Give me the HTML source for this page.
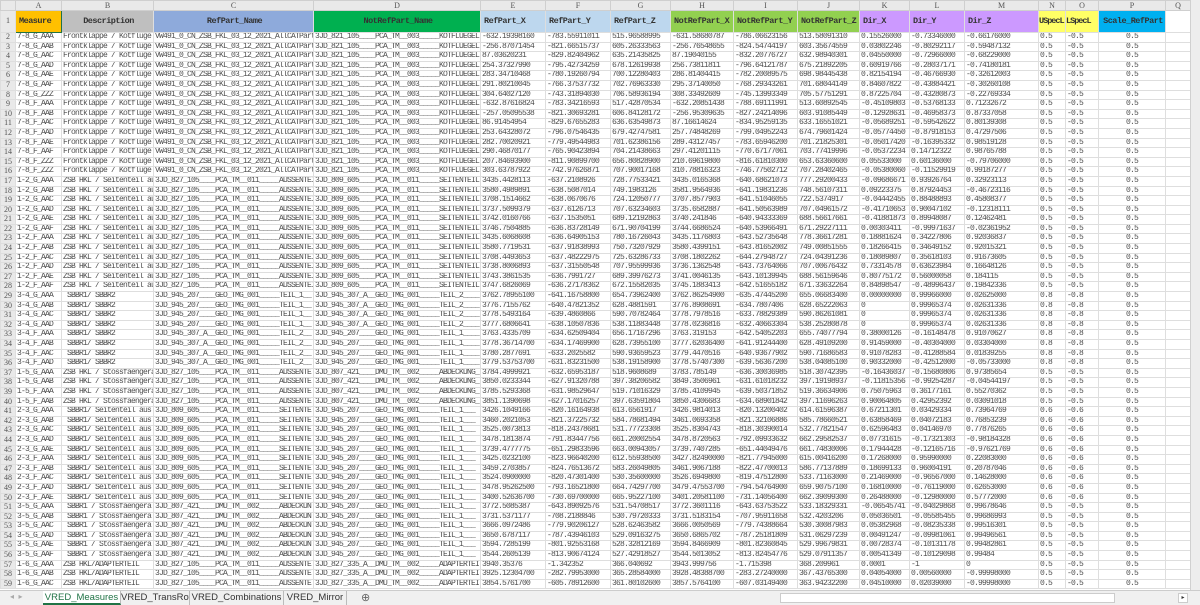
<!DOCTYPE html>
<html><head><meta charset="utf-8"><style>
*{margin:0;padding:0;box-sizing:border-box}
body{width:1200px;height:605px;overflow:hidden;background:#fff;font-family:"Liberation Mono","Noto Sans CJK SC",monospace;font-size:8px;color:#4d4d4d;position:relative}
table{border-collapse:collapse;table-layout:fixed;position:absolute;left:0;top:0;width:1190px}
td,th{border:1px solid #dedede;white-space:nowrap;overflow:hidden;padding:0 1px;height:9.6px;line-height:8.6px;font-weight:normal;text-align:left}
td{letter-spacing:-0.8px}
th{background:#e9e9e9;color:#555;text-align:center;font-family:"Liberation Serif",serif;font-size:8px}
tr.cl th{height:10px;line-height:9px;border-color:#cfcfcf}
tr.h td{height:22px;font-weight:bold;color:#333;font-size:8.5px;text-align:left;padding-left:3px;letter-spacing:-0.5px}
td.c{text-align:center}
.vs{position:absolute;left:1190px;top:0;width:10px;height:590px;background:#ededed;border-left:1px solid #d0d0d0}
.bar{position:absolute;left:0;top:590px;width:1200px;height:15px;background:#f0f0f0;border-top:1px solid #ccc;font-family:"Liberation Sans",sans-serif;font-size:9.5px;color:#333}
.tab{position:absolute;top:0;height:14px;line-height:13px;text-align:center;border-right:1px solid #bbb;white-space:nowrap;overflow:hidden}
</style></head><body>
<table>
<colgroup><col style="width:15px"><col style="width:46px"><col style="width:92px"><col style="width:160px"><col style="width:167px"><col style="width:65px"><col style="width:65px"><col style="width:60px"><col style="width:63px"><col style="width:64px"><col style="width:62px"><col style="width:50px"><col style="width:55px"><col style="width:74px"><col style="width:27px"><col style="width:33px"><col style="width:67px"><col style="width:25px"></colgroup>
<tr class="cl"><th></th><th>A</th><th>B</th><th>C</th><th>D</th><th>E</th><th>F</th><th>G</th><th>H</th><th>I</th><th>J</th><th>K</th><th>L</th><th>M</th><th>N</th><th>O</th><th>P</th><th>Q</th></tr>
<tr class="h"><th>1</th><td style="background:#ffc000;border:1px solid #217346">Measure</td><td style="background:#bfbfbf;text-align:center">Description</td><td style="background:#8eaadb;text-align:center">RefPart_Name</td><td style="background:#00b050;text-align:center">NotRefPart_Name</td><td style="background:#bdd7ee">RefPart_X</td><td style="background:#bdd7ee">RefPart_Y</td><td style="background:#bdd7ee">RefPart_Z</td><td style="background:#92d050">NotRefPart_X</td><td style="background:#92d050">NotRefPart_Y</td><td style="background:#92d050">NotRefPart_Z</td><td style="background:#cc99ff">Dir_X</td><td style="background:#cc99ff">Dir_Y</td><td style="background:#cc99ff">Dir_Z</td><td style="background:#ffff66;padding:0;letter-spacing:-1px">USpecL</td><td style="background:#ffff66;padding:0;letter-spacing:-1px">LSpecL</td><td style="background:#00b0f0;text-align:center">Scale_RefPart</td><td></td></tr>
<tr><th>2</th><td>7-8_G_AAA</td><td>Frontklappe / Kotflügel</td><td>VW491_0_CN_ZSB_FKL_03_12_2021_AllCATPart</td><td>3JD_821_105____PCA_TM__003_____KOTFLUEGEL</td><td>-632.19398160</td><td>-783.55911011</td><td>515.96588995</td><td>-631.58680787</td><td>-786.06623156</td><td>513.58091310</td><td>0.15526000</td><td>-0.73346000</td><td>-0.66176000</td><td>0.5</td><td>-0.5</td><td class="c">0.5</td><td></td></tr>
<tr><th>3</th><td>7-8_G_AAB</td><td>Frontklappe / Kotflügel</td><td>VW491_0_CN_ZSB_FKL_03_12_2021_AllCATPart</td><td>3JD_821_105____PCA_TM__003_____KOTFLUEGEL</td><td>-256.87071454</td><td>-821.66515737</td><td>605.26333563</td><td>-256.76548655</td><td>-824.54744197</td><td>603.35674559</td><td>0.03802246</td><td>-0.80292117</td><td>-0.59487132</td><td>0.5</td><td>-0.5</td><td class="c">0.5</td><td></td></tr>
<tr><th>4</th><td>7-8_G_AAC</td><td>Frontklappe / Kotflügel</td><td>VW491_0_CN_ZSB_FKL_03_12_2021_AllCATPart</td><td>3JD_821_105____PCA_TM__003_____KOTFLUEGEL</td><td>87.03620231</td><td>-829.82404962</td><td>635.21435825</td><td>87.19040155</td><td>-832.20776727</td><td>632.98940301</td><td>0.04550000</td><td>-0.72966000</td><td>-0.68229000</td><td>0.5</td><td>-0.5</td><td class="c">0.5</td><td></td></tr>
<tr><th>5</th><td>7-8_G_AAD</td><td>Frontklappe / Kotflügel</td><td>VW491_0_CN_ZSB_FKL_03_12_2021_AllCATPart</td><td>3JD_821_105____PCA_TM__003_____KOTFLUEGEL</td><td>254.37327990</td><td>-795.42734259</td><td>678.12619938</td><td>256.73811811</td><td>-796.64121787</td><td>675.21892205</td><td>0.60919766</td><td>-0.28037171</td><td>-0.74180181</td><td>0.5</td><td>-0.5</td><td class="c">0.5</td><td></td></tr>
<tr><th>6</th><td>7-8_G_AAE</td><td>Frontklappe / Kotflügel</td><td>VW491_0_CN_ZSB_FKL_03_12_2021_AllCATPart</td><td>3JD_821_105____PCA_TM__003_____KOTFLUEGEL</td><td>283.34710468</td><td>-780.19260794</td><td>700.12280403</td><td>286.81404415</td><td>-782.20089575</td><td>698.98445438</td><td>0.82154194</td><td>-0.46766930</td><td>-0.32612003</td><td>0.5</td><td>-0.5</td><td class="c">0.5</td><td></td></tr>
<tr><th>7</th><td>7-8_G_AAF</td><td>Frontklappe / Kotflügel</td><td>VW491_0_CN_ZSB_FKL_03_12_2021_AllCATPart</td><td>3JD_821_105____PCA_TM__003_____KOTFLUEGEL</td><td>291.80210045</td><td>-766.37537732</td><td>702.76963330</td><td>295.37140050</td><td>-768.29343261</td><td>701.68044149</td><td>0.84607822</td><td>-0.43884421</td><td>-0.30260108</td><td>0.5</td><td>-0.5</td><td class="c">0.5</td><td></td></tr>
<tr><th>8</th><td>7-8_G_ZZZ</td><td>Frontklappe / Kotflügel</td><td>VW491_0_CN_ZSB_FKL_03_12_2021_AllCATPart</td><td>3JD_821_105____PCA_TM__003_____KOTFLUEGEL</td><td>304.64027120</td><td>-743.31894030</td><td>706.58936194</td><td>308.33492609</td><td>-745.13993349</td><td>705.57751291</td><td>0.87225704</td><td>-0.43280873</td><td>-0.22769334</td><td>0.5</td><td>-0.5</td><td class="c">0.5</td><td></td></tr>
<tr><th>9</th><td>7-8_F_AAA</td><td>Frontklappe / Kotflügel</td><td>VW491_0_CN_ZSB_FKL_03_12_2021_AllCATPart</td><td>3JD_821_105____PCA_TM__003_____KOTFLUEGEL</td><td>-632.87616824</td><td>-783.34216593</td><td>517.42870534</td><td>-632.20851438</td><td>-788.69111991</td><td>513.60892545</td><td>-0.45109803</td><td>-0.53768133</td><td>0.71232672</td><td>0.5</td><td>-0.5</td><td class="c">0.5</td><td></td></tr>
<tr><th>10</th><td>7-8_F_AAB</td><td>Frontklappe / Kotflügel</td><td>VW491_0_CN_ZSB_FKL_03_12_2021_AllCATPart</td><td>3JD_821_105____PCA_TM__003_____KOTFLUEGEL</td><td>-257.05095538</td><td>-821.30693281</td><td>606.84128172</td><td>-256.95309635</td><td>-827.24214096</td><td>603.91085449</td><td>-0.12928631</td><td>-0.46958373</td><td>0.87337058</td><td>0.5</td><td>-0.5</td><td class="c">0.5</td><td></td></tr>
<tr><th>11</th><td>7-8_F_AAC</td><td>Frontklappe / Kotflügel</td><td>VW491_0_CN_ZSB_FKL_03_12_2021_AllCATPart</td><td>3JD_821_105____PCA_TM__003_____KOTFLUEGEL</td><td>86.91454954</td><td>-829.67655283</td><td>636.63549873</td><td>87.16614624</td><td>-834.95259135</td><td>633.16551021</td><td>-0.05689251</td><td>-0.59542622</td><td>0.80139308</td><td>0.5</td><td>-0.5</td><td class="c">0.5</td><td></td></tr>
<tr><th>12</th><td>7-8_F_AAD</td><td>Frontklappe / Kotflügel</td><td>VW491_0_CN_ZSB_FKL_03_12_2021_AllCATPart</td><td>3JD_821_105____PCA_TM__003_____KOTFLUEGEL</td><td>253.64328072</td><td>-796.07546435</td><td>679.42747581</td><td>257.74848269</td><td>-799.04952243</td><td>674.79601424</td><td>-0.05774450</td><td>-0.87918153</td><td>0.47297506</td><td>0.5</td><td>-0.5</td><td class="c">0.5</td><td></td></tr>
<tr><th>13</th><td>7-8_F_AAE</td><td>Frontklappe / Kotflügel</td><td>VW491_0_CN_ZSB_FKL_03_12_2021_AllCATPart</td><td>3JD_821_105____PCA_TM__003_____KOTFLUEGEL</td><td>282.70020921</td><td>-779.49544983</td><td>701.62386156</td><td>289.43127457</td><td>-783.65946200</td><td>701.21825301</td><td>-0.05017420</td><td>-0.16395332</td><td>0.98519128</td><td>0.5</td><td>-0.5</td><td class="c">0.5</td><td></td></tr>
<tr><th>14</th><td>7-8_F_AAF</td><td>Frontklappe / Kotflügel</td><td>VW491_0_CN_ZSB_FKL_03_12_2021_AllCATPart</td><td>3JD_821_105____PCA_TM__003_____KOTFLUEGEL</td><td>290.46870177</td><td>-765.90423894</td><td>704.21438663</td><td>297.41201115</td><td>-770.67177061</td><td>703.77419996</td><td>-0.05372234</td><td>0.14712322</td><td>0.98765788</td><td>0.5</td><td>-0.5</td><td class="c">0.5</td><td></td></tr>
<tr><th>15</th><td>7-8_F_ZZZ</td><td>Frontklappe / Kotflügel</td><td>VW491_0_CN_ZSB_FKL_03_12_2021_AllCATPart</td><td>3JD_821_105____PCA_TM__003_____KOTFLUEGEL</td><td>207.84693900</td><td>-811.90899700</td><td>656.80828900</td><td>210.69619800</td><td>-816.61810300</td><td>653.63360600</td><td>0.05533000</td><td>0.60136000</td><td>-0.79706000</td><td>0.5</td><td>-0.5</td><td class="c">0.5</td><td></td></tr>
<tr><th>16</th><td>7-8_F_ZZZ</td><td>Frontklappe / Kotflügel</td><td>VW491_0_CN_ZSB_FKL_03_12_2021_AllCATPart</td><td>3JD_821_105____PCA_TM__003_____KOTFLUEGEL</td><td>303.63787922</td><td>-742.97626871</td><td>707.90017168</td><td>310.78816323</td><td>-746.77502712</td><td>707.28402465</td><td>-0.05380060</td><td>-0.11529919</td><td>0.99187277</td><td>0.5</td><td>-0.5</td><td class="c">0.5</td><td></td></tr>
<tr><th>17</th><td>1-2_G_AAA</td><td>ZSB HKL / Seitenteil au</td><td>3JD_827_105____PCA_TM__011_____AUSSENTEIL</td><td>3JD_809_605____PCA_TM__011_____SEITENTEIL</td><td>3435.4428113</td><td>-637.2108926</td><td>728.77533421</td><td>3435.0165368</td><td>-640.68621073</td><td>777.29200433</td><td>-0.09686671</td><td>0.93926764</td><td>0.32923113</td><td>0.5</td><td>-0.5</td><td class="c">0.5</td><td></td></tr>
<tr><th>18</th><td>1-2_G_AAB</td><td>ZSB HKL / Seitenteil au</td><td>3JD_827_105____PCA_TM__011_____AUSSENTEIL</td><td>3JD_809_605____PCA_TM__011_____SEITENTEIL</td><td>3580.4989891</td><td>-638.5087014</td><td>749.1983126</td><td>3581.9564936</td><td>-641.19831236</td><td>748.56107311</td><td>0.09223375</td><td>0.87924453</td><td>-0.46723116</td><td>0.5</td><td>-0.5</td><td class="c">0.5</td><td></td></tr>
<tr><th>19</th><td>1-2_G_AAC</td><td>ZSB HKL / Seitenteil au</td><td>3JD_827_105____PCA_TM__011_____AUSSENTEIL</td><td>3JD_809_605____PCA_TM__011_____SEITENTEIL</td><td>3708.1514662</td><td>-638.0670676</td><td>724.12050777</td><td>3707.8577903</td><td>-641.51046055</td><td>722.5374917</td><td>-0.04442455</td><td>0.88488893</td><td>0.45808377</td><td>0.5</td><td>-0.5</td><td class="c">0.5</td><td></td></tr>
<tr><th>20</th><td>1-2_G_AAD</td><td>ZSB HKL / Seitenteil au</td><td>3JD_827_105____PCA_TM__011_____AUSSENTEIL</td><td>3JD_809_605____PCA_TM__011_____SEITENTEIL</td><td>3737.5099379</td><td>-637.6126713</td><td>707.63234603</td><td>3735.6582887</td><td>-641.50563989</td><td>707.04961572</td><td>-0.41710653</td><td>0.90047102</td><td>-0.12318111</td><td>0.5</td><td>-0.5</td><td class="c">0.5</td><td></td></tr>
<tr><th>21</th><td>1-2_G_AAE</td><td>ZSB HKL / Seitenteil au</td><td>3JD_827_105____PCA_TM__011_____AUSSENTEIL</td><td>3JD_809_605____PCA_TM__011_____SEITENTEIL</td><td>3742.0160766</td><td>-637.1535051</td><td>689.12192863</td><td>3740.241846</td><td>-640.94333369</td><td>688.56617661</td><td>-0.41881873</td><td>0.89948087</td><td>0.12462481</td><td>0.5</td><td>-0.5</td><td class="c">0.5</td><td></td></tr>
<tr><th>22</th><td>1-2_G_AAF</td><td>ZSB HKL / Seitenteil au</td><td>3JD_827_105____PCA_TM__011_____AUSSENTEIL</td><td>3JD_809_605____PCA_TM__011_____SEITENTEIL</td><td>3746.7504885</td><td>-636.83728149</td><td>671.90704199</td><td>3744.6686524</td><td>-640.53966491</td><td>671.29227111</td><td>0.00303411</td><td>-0.99971637</td><td>-0.02361952</td><td>0.5</td><td>-0.5</td><td class="c">0.5</td><td></td></tr>
<tr><th>23</th><td>1-2_F_AAA</td><td>ZSB HKL / Seitenteil au</td><td>3JD_827_105____PCA_TM__011_____AUSSENTEIL</td><td>3JD_809_605____PCA_TM__011_____SEITENTEIL</td><td>3435.6068608</td><td>-636.64905153</td><td>780.16726043</td><td>3435.1176803</td><td>-643.52735648</td><td>778.36617281</td><td>0.18881624</td><td>0.34227806</td><td>0.92036837</td><td>0.5</td><td>-0.5</td><td class="c">0.5</td><td></td></tr>
<tr><th>24</th><td>1-2_F_AAB</td><td>ZSB HKL / Seitenteil au</td><td>3JD_827_105____PCA_TM__011_____AUSSENTEIL</td><td>3JD_809_605____PCA_TM__011_____SEITENTEIL</td><td>3580.7719531</td><td>-637.91838993</td><td>750.73207929</td><td>3580.4399151</td><td>-643.81652002</td><td>749.00851555</td><td>0.18266415</td><td>0.34649152</td><td>0.92015321</td><td>0.5</td><td>-0.5</td><td class="c">0.5</td><td></td></tr>
<tr><th>25</th><td>1-2_F_AAC</td><td>ZSB HKL / Seitenteil au</td><td>3JD_827_105____PCA_TM__011_____AUSSENTEIL</td><td>3JD_809_605____PCA_TM__011_____SEITENTEIL</td><td>3708.4493653</td><td>-637.48222975</td><td>725.63286733</td><td>3708.1802262</td><td>-644.27948727</td><td>724.04391236</td><td>0.18089807</td><td>0.35618103</td><td>0.91673605</td><td>0.5</td><td>-0.5</td><td class="c">0.5</td><td></td></tr>
<tr><th>26</th><td>1-2_F_AAD</td><td>ZSB HKL / Seitenteil au</td><td>3JD_827_105____PCA_TM__011_____AUSSENTEIL</td><td>3JD_809_605____PCA_TM__011_____SEITENTEIL</td><td>3738.8006893</td><td>-637.31550548</td><td>707.95599936</td><td>3736.1362548</td><td>-643.73764066</td><td>707.00676432</td><td>0.73314578</td><td>0.63623984</td><td>0.16648126</td><td>0.5</td><td>-0.5</td><td class="c">0.5</td><td></td></tr>
<tr><th>27</th><td>1-2_F_AAE</td><td>ZSB HKL / Seitenteil au</td><td>3JD_827_105____PCA_TM__011_____AUSSENTEIL</td><td>3JD_809_605____PCA_TM__011_____SEITENTEIL</td><td>3743.3861535</td><td>-636.7991727</td><td>689.39976273</td><td>3741.0046135</td><td>-643.10139945</td><td>688.56159646</td><td>0.80775172</td><td>0.56000058</td><td>0.184115</td><td>0.5</td><td>-0.5</td><td class="c">0.5</td><td></td></tr>
<tr><th>28</th><td>1-2_F_AAF</td><td>ZSB HKL / Seitenteil au</td><td>3JD_827_105____PCA_TM__011_____AUSSENTEIL</td><td>3JD_809_605____PCA_TM__011_____SEITENTEIL</td><td>3747.6826069</td><td>-636.27178362</td><td>672.15582035</td><td>3745.1883413</td><td>-642.51655182</td><td>671.33632264</td><td>0.84898547</td><td>-0.48996437</td><td>0.19842336</td><td>0.5</td><td>-0.5</td><td class="c">0.5</td><td></td></tr>
<tr><th>29</th><td>3-4_G_AAA</td><td>&nbsp;SBBR1/ SBBR2</td><td>3JD_945_207____GEO_TMG_001_____TEIL_1__</td><td>3JD_945_307_A__GEO_TMG_001_____TEIL_2____</td><td>3762.78955100</td><td>-641.16758800</td><td>654.73962400</td><td>3762.86254900</td><td>-635.47445200</td><td>655.06683400</td><td>0.00000000</td><td>0.99966000</td><td>0.02625000</td><td>0.8</td><td>-0.8</td><td class="c">0.5</td><td></td></tr>
<tr><th>30</th><td>3-4_G_AAB</td><td>&nbsp;SBBR1/ SBBR2</td><td>3JD_945_207____GEO_TMG_001_____TEIL_1__</td><td>3JD_945_307_A__GEO_TMG_001_____TEIL_2____</td><td>3776.7155762</td><td>-640.47821352</td><td>628.4881591</td><td>3776.8908691</td><td>-634.7807406</td><td>628.65222063</td><td>0</td><td>0.99965374</td><td>0.02631336</td><td>0.8</td><td>-0.8</td><td class="c">0.5</td><td></td></tr>
<tr><th>31</th><td>3-4_G_AAC</td><td>&nbsp;SBBR1/ SBBR2</td><td>3JD_945_207____GEO_TMG_001_____TEIL_1__</td><td>3JD_945_307_A__GEO_TMG_001_____TEIL_2____</td><td>3778.5493164</td><td>-639.4860866</td><td>590.70782464</td><td>3778.7978516</td><td>-633.78829389</td><td>590.86261081</td><td>0</td><td>0.99965374</td><td>0.02631336</td><td>0.8</td><td>-0.8</td><td class="c">0.5</td><td></td></tr>
<tr><th>32</th><td>3-4_G_AAD</td><td>&nbsp;SBBR1/ SBBR2</td><td>3JD_945_207____GEO_TMG_001_____TEIL_1__</td><td>3JD_945_307_A__GEO_TMG_001_____TEIL_2____</td><td>3777.6806641</td><td>-638.10507836</td><td>538.11883448</td><td>3778.0236816</td><td>-632.40663304</td><td>538.25280878</td><td>0</td><td>0.99965374</td><td>0.02631336</td><td>0.8</td><td>-0.8</td><td class="c">0.5</td><td></td></tr>
<tr><th>33</th><td>3-4_F_AAA</td><td>&nbsp;SBBR1/ SBBR2</td><td>3JD_945_307_A__GEO_TMG_001_____TEIL_2__</td><td>3JD_945_207____GEO_TMG_001_____TEIL_1____</td><td>3763.4335709</td><td>-634.62509404</td><td>656.17167296</td><td>3763.319153</td><td>-642.54052203</td><td>655.74077794</td><td>0.38000126</td><td>-0.16148478</td><td>0.91070627</td><td>0.8</td><td>-0.8</td><td class="c">0.5</td><td></td></tr>
<tr><th>34</th><td>3-4_F_AAB</td><td>&nbsp;SBBR1/ SBBR2</td><td>3JD_945_307_A__GEO_TMG_001_____TEIL_2__</td><td>3JD_945_207____GEO_TMG_001_____TEIL_1____</td><td>3778.36714700</td><td>-634.17469900</td><td>628.73955100</td><td>3777.62036400</td><td>-641.91244400</td><td>628.49109200</td><td>0.91459000</td><td>-0.40304000</td><td>0.03304000</td><td>0.8</td><td>-0.8</td><td class="c">0.5</td><td></td></tr>
<tr><th>35</th><td>3-4_F_AAC</td><td>&nbsp;SBBR1/ SBBR2</td><td>3JD_945_307_A__GEO_TMG_001_____TEIL_2__</td><td>3JD_945_207____GEO_TMG_001_____TEIL_1____</td><td>3780.2877691</td><td>-633.2025582</td><td>590.93659523</td><td>3779.4470516</td><td>-640.93677902</td><td>590.71686583</td><td>0.91078283</td><td>-0.41288584</td><td>0.01839255</td><td>0.8</td><td>-0.8</td><td class="c">0.5</td><td></td></tr>
<tr><th>36</th><td>3-4_F_AAD</td><td>&nbsp;SBBR1/ SBBR2</td><td>3JD_945_307_A__GEO_TMG_001_____TEIL_2__</td><td>3JD_945_207____GEO_TMG_001_____TEIL_1____</td><td>3779.53753700</td><td>-631.83231500</td><td>538.19158900</td><td>3778.57407300</td><td>-639.56367200</td><td>538.04085100</td><td>0.90332000</td><td>-0.42512000</td><td>-0.05733000</td><td>0.8</td><td>-0.8</td><td class="c">0.5</td><td></td></tr>
<tr><th>37</th><td>1-5_G_AAA</td><td>ZSB HKL / Stossfaengera</td><td>3JD_827_105____PCA_TM__011_____AUSSENTE</td><td>3JD_807_421____DMU_TM__002_____ABDECKUNG_</td><td>3784.4999921</td><td>-632.65953187</td><td>518.9608689</td><td>3783.785149</td><td>-636.30036985</td><td>518.30742395</td><td>-0.16436037</td><td>-0.15680806</td><td>0.97385654</td><td>0.5</td><td>-0.5</td><td class="c">0.5</td><td></td></tr>
<tr><th>38</th><td>1-5_G_AAB</td><td>ZSB HKL / Stossfaengera</td><td>3JD_827_105____PCA_TM__011_____AUSSENTE</td><td>3JD_807_421____DMU_TM__002_____ABDECKUNG_</td><td>3850.0233344</td><td>-627.91320788</td><td>397.38206582</td><td>3849.3506961</td><td>-631.61018232</td><td>397.19198937</td><td>-0.11815356</td><td>-0.99254287</td><td>-0.04544197</td><td>0.5</td><td>-0.5</td><td class="c">0.5</td><td></td></tr>
<tr><th>39</th><td>1-5_F_AAA</td><td>ZSB HKL / Stossfaengera</td><td>3JD_827_105____PCA_TM__011_____AUSSENTE</td><td>3JD_807_421____DMU_TM__002_____ABDECKUNG_</td><td>3785.5293368</td><td>-631.98529647</td><td>519.71016329</td><td>3785.4109945</td><td>-639.50371852</td><td>519.36634906</td><td>0.75075963</td><td>0.36177161</td><td>0.55270362</td><td>0.5</td><td>-0.5</td><td class="c">0.5</td><td></td></tr>
<tr><th>40</th><td>1-5_F_AAB</td><td>ZSB HKL / Stossfaengera</td><td>3JD_827_105____PCA_TM__011_____AUSSENTE</td><td>3JD_807_421____DMU_TM__002_____ABDECKUNG_</td><td>3851.1390698</td><td>-627.17016257</td><td>397.63591804</td><td>3850.4306683</td><td>-634.68901842</td><td>397.11696263</td><td>0.90064805</td><td>0.42952392</td><td>0.03091018</td><td>0.5</td><td>-0.5</td><td class="c">0.5</td><td></td></tr>
<tr><th>41</th><td>2-3_G_AAA</td><td>&nbsp;SBBR1/ Seitenteil aus</td><td>3JD_809_605____PCA_TM__011_____SEITENTE</td><td>3JD_945_207____GEO_TMG_001_____TEIL_1___</td><td>3426.1049166</td><td>-820.16164938</td><td>613.6561917</td><td>3426.9814013</td><td>-820.13200402</td><td>614.61596387</td><td>0.67211301</td><td>0.03429334</td><td>0.73964769</td><td>0.6</td><td>-0.6</td><td class="c">0.5</td><td></td></tr>
<tr><th>42</th><td>2-3_G_AAB</td><td>&nbsp;SBBR1/ Seitenteil aus</td><td>3JD_809_605____PCA_TM__011_____SEITENTE</td><td>3JD_945_207____GEO_TMG_001_____TEIL_1___</td><td>3460.2021053</td><td>-821.37225732</td><td>584.78681494</td><td>3461.0693358</td><td>-821.32106886</td><td>585.78660521</td><td>0.63858469</td><td>0.04072183</td><td>0.76853239</td><td>0.6</td><td>-0.6</td><td class="c">0.5</td><td></td></tr>
<tr><th>43</th><td>2-3_G_AAC</td><td>&nbsp;SBBR1/ Seitenteil aus</td><td>3JD_809_605____PCA_TM__011_____SEITENTE</td><td>3JD_945_207____GEO_TMG_001_____TEIL_1___</td><td>3525.0073813</td><td>-818.24378681</td><td>531.77723308</td><td>3525.8304743</td><td>-818.30390014</td><td>532.77821547</td><td>0.62596483</td><td>0.04146970</td><td>0.77876265</td><td>0.6</td><td>-0.6</td><td class="c">0.5</td><td></td></tr>
<tr><th>44</th><td>2-3_G_AAD</td><td>&nbsp;SBBR1/ Seitenteil aus</td><td>3JD_809_605____PCA_TM__011_____SEITENTE</td><td>3JD_945_207____GEO_TMG_001_____TEIL_1___</td><td>3478.1813874</td><td>-791.83447756</td><td>661.20002554</td><td>3478.8720563</td><td>-792.09933632</td><td>662.29582537</td><td>0.07731615</td><td>-0.17321303</td><td>-0.98184328</td><td>0.6</td><td>-0.6</td><td class="c">0.5</td><td></td></tr>
<tr><th>45</th><td>2-3_G_AAE</td><td>&nbsp;SBBR1/ Seitenteil aus</td><td>3JD_809_605____PCA_TM__011_____SEITENTE</td><td>3JD_945_207____GEO_TMG_001_____TEIL_1___</td><td>3739.4777775</td><td>-651.29833596</td><td>663.00943057</td><td>3739.7407285</td><td>-651.44049476</td><td>661.74830006</td><td>0.17944428</td><td>-0.12165716</td><td>-0.97621769</td><td>0.6</td><td>-0.6</td><td class="c">0.5</td><td></td></tr>
<tr><th>46</th><td>2-3_F_AAA</td><td>&nbsp;SBBR1/ Seitenteil aus</td><td>3JD_809_605____PCA_TM__011_____SEITENTE</td><td>3JD_945_207____GEO_TMG_001_____TEIL_1___</td><td>3425.0232100</td><td>-823.96640200</td><td>612.55938500</td><td>3427.82490000</td><td>-821.77945000</td><td>615.00416200</td><td>0.17268000</td><td>0.95990000</td><td>0.22083000</td><td>0.6</td><td>-0.6</td><td class="c">0.5</td><td></td></tr>
<tr><th>47</th><td>2-3_F_AAB</td><td>&nbsp;SBBR1/ Seitenteil aus</td><td>3JD_809_605____PCA_TM__011_____SEITENTE</td><td>3JD_945_207____GEO_TMG_001_____TEIL_1___</td><td>3459.2703857</td><td>-824.76513672</td><td>583.26049805</td><td>3461.9067188</td><td>-822.47700013</td><td>586.77137889</td><td>0.18699133</td><td>0.96004191</td><td>0.20787046</td><td>0.6</td><td>-0.6</td><td class="c">0.5</td><td></td></tr>
<tr><th>48</th><td>2-3_F_AAC</td><td>&nbsp;SBBR1/ Seitenteil aus</td><td>3JD_809_605____PCA_TM__011_____SEITENTE</td><td>3JD_945_207____GEO_TMG_001_____TEIL_1___</td><td>3524.0900000</td><td>-820.47301400</td><td>530.35600000</td><td>3526.6949800</td><td>-819.47512800</td><td>533.71163000</td><td>0.21469000</td><td>-0.96567000</td><td>0.14628000</td><td>0.6</td><td>-0.6</td><td class="c">0.5</td><td></td></tr>
<tr><th>49</th><td>2-3_F_AAD</td><td>&nbsp;SBBR1/ Seitenteil aus</td><td>3JD_809_605____PCA_TM__011_____SEITENTE</td><td>3JD_945_207____GEO_TMG_001_____TEIL_1___</td><td>3478.95262500</td><td>-793.16521800</td><td>664.74297700</td><td>3479.47553700</td><td>-794.54764900</td><td>659.90757100</td><td>0.16810000</td><td>-0.76119000</td><td>0.62653000</td><td>0.6</td><td>-0.6</td><td class="c">0.5</td><td></td></tr>
<tr><th>50</th><td>2-3_F_AAE</td><td>&nbsp;SBBR1/ Seitenteil aus</td><td>3JD_809_605____PCA_TM__011_____SEITENTE</td><td>3JD_945_207____GEO_TMG_001_____TEIL_1___</td><td>3400.52636700</td><td>-730.69700000</td><td>665.95227100</td><td>3401.20581100</td><td>-731.14056400</td><td>662.39099300</td><td>0.26488000</td><td>-0.12980000</td><td>0.57772000</td><td>0.6</td><td>-0.6</td><td class="c">0.5</td><td></td></tr>
<tr><th>51</th><td>3-5_G_AAA</td><td>&nbsp;SBBR1 / Stossfaengeral</td><td>3JD_807_421____DMU_TM__002_____ABDECKUN</td><td>3JD_945_207____GEO_TMG_001_____TEIL_1___</td><td>3772.5085387</td><td>-643.89092576</td><td>531.54708517</td><td>3772.3601116</td><td>-643.63753522</td><td>533.18329331</td><td>-0.06545741</td><td>-0.04029868</td><td>0.99678646</td><td>0.5</td><td>-0.5</td><td class="c">0.5</td><td></td></tr>
<tr><th>52</th><td>3-5_G_AAB</td><td>&nbsp;SBBR1 / Stossfaengeral</td><td>3JD_807_421____DMU_TM__002_____ABDECKUN</td><td>3JD_945_207____GEO_TMG_001_____TEIL_1___</td><td>3731.5371177</td><td>-708.2188846</td><td>530.79720333</td><td>3731.5183154</td><td>-707.95911658</td><td>532.4203206</td><td>0.05036501</td><td>-0.05585455</td><td>0.99686993</td><td>0.5</td><td>-0.5</td><td class="c">0.5</td><td></td></tr>
<tr><th>53</th><td>3-5_G_AAC</td><td>&nbsp;SBBR1 / Stossfaengeral</td><td>3JD_807_421____DMU_TM__002_____ABDECKUN</td><td>3JD_945_207____GEO_TMG_001_____TEIL_1___</td><td>3666.0972486</td><td>-779.90206127</td><td>528.62463582</td><td>3666.0050569</td><td>-779.74388664</td><td>530.30087983</td><td>0.05382968</td><td>-0.08235338</td><td>0.99516301</td><td>0.5</td><td>-0.5</td><td class="c">0.5</td><td></td></tr>
<tr><th>54</th><td>3-5_G_AAD</td><td>&nbsp;SBBR1 / Stossfaengeral</td><td>3JD_807_421____DMU_TM__002_____ABDECKUN</td><td>3JD_945_207____GEO_TMG_001_____TEIL_1___</td><td>3650.6787117</td><td>-787.43946103</td><td>529.09163275</td><td>3650.6865702</td><td>-787.25181809</td><td>531.06297239</td><td>0.00491247</td><td>-0.09981061</td><td>0.99496561</td><td>0.5</td><td>-0.5</td><td class="c">0.5</td><td></td></tr>
<tr><th>55</th><td>3-5_G_AAE</td><td>&nbsp;SBBR1 / Stossfaengeral</td><td>3JD_807_421____DMU_TM__002_____ABDECKUN</td><td>3JD_945_207____GEO_TMG_001_____TEIL_1___</td><td>3594.7285199</td><td>-801.92553168</td><td>528.32812169</td><td>3594.8466909</td><td>-801.82360845</td><td>529.99679831</td><td>0.00728374</td><td>-0.10131178</td><td>0.99482861</td><td>0.5</td><td>-0.5</td><td class="c">0.5</td><td></td></tr>
<tr><th>56</th><td>3-5_G_AAF</td><td>&nbsp;SBBR1 / Stossfaengeral</td><td>3JD_807_421____DMU_TM__002_____ABDECKUN</td><td>3JD_945_207____GEO_TMG_001_____TEIL_1___</td><td>3544.2605139</td><td>-813.90674124</td><td>527.42918527</td><td>3544.5013052</td><td>-813.82454776</td><td>529.07911357</td><td>0.00541349</td><td>-0.10129098</td><td>0.99484</td><td>0.5</td><td>-0.5</td><td class="c">0.5</td><td></td></tr>
<tr><th>57</th><td>1-6_G_AAA</td><td>ZSB HKL/ADAPTERTEIL</td><td>3JD_827_105____PCA_TM__011_____AUSSENTE</td><td>3JD_827_335_A__DMU_TM__002_____ADAPTERTEI</td><td>3940.35376</td><td>-1.342352</td><td>366.040692</td><td>3943.999756</td><td>-1.715398</td><td>368.209961</td><td>0.0001</td><td>-1</td><td>0</td><td>0.5</td><td>-0.5</td><td class="c">0.5</td><td></td></tr>
<tr><th>58</th><td>1-6_G_AAB</td><td>ZSB HKL/ADAPTERTEIL</td><td>3JD_827_105____PCA_TM__011_____AUSSENTE</td><td>3JD_827_335_A__DMU_TM__002_____ADAPTERTEI</td><td>3925.12304700</td><td>-282.79953000</td><td>365.28584000</td><td>3928.48388700</td><td>-283.27240000</td><td>367.43765300</td><td>0.04054000</td><td>0.00560000</td><td>-0.99998000</td><td>0.5</td><td>-0.5</td><td class="c">0.5</td><td></td></tr>
<tr><th>59</th><td>1-6_G_AAC</td><td>ZSB HKL/ADAPTERTEIL</td><td>3JD_827_105____PCA_TM__011_____AUSSENTE</td><td>3JD_827_335_A__DMU_TM__002_____ADAPTERTEI</td><td>3854.5761700</td><td>-605.78912600</td><td>361.80102600</td><td>3857.5764100</td><td>-607.03149400</td><td>363.94232200</td><td>0.04510000</td><td>0.02039000</td><td>-0.99998000</td><td>0.5</td><td>-0.5</td><td class="c">0.5</td><td></td></tr>
</table>
<div class="vs"></div>
<div class="bar">
<span style="position:absolute;left:10px;top:1px;color:#aaa;font-size:8px">◂ &nbsp;▸</span>
<div class="tab" style="left:43px;width:78px;background:#fff;color:#217346;border-bottom:2px solid #217346">VRED_Measures</div>
<div class="tab" style="left:121px;width:69px">VRED_TransRot</div>
<div class="tab" style="left:190px;width:94px">VRED_Combinations</div>
<div class="tab" style="left:284px;width:63px">VRED_Mirror</div>
<span style="position:absolute;left:361px;top:0;font-size:11px;color:#666">⊕</span>
<div style="position:absolute;left:780px;top:2px;width:335px;height:10px;background:#fff;border:1px solid #ccc"></div>
<div style="position:absolute;left:1178px;top:2px;width:10px;height:10px;background:#fff;border:1px solid #ccc;font-size:6px;line-height:8px;text-align:center">▸</div>
</div>
</body></html>
